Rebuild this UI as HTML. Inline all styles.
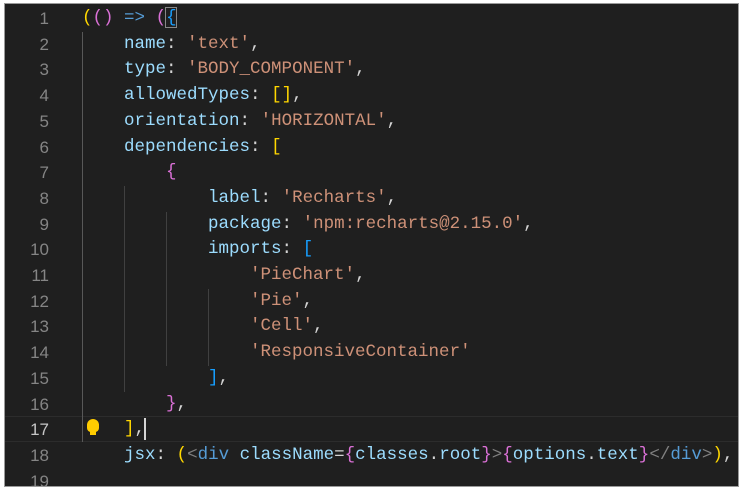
<!DOCTYPE html>
<html><head><meta charset="utf-8"><style>
html,body{margin:0;padding:0;width:742px;height:490px;background:#fff;overflow:hidden}
#ed{position:absolute;left:4px;top:3px;width:735px;height:484px;background:#1f1f1f;border:1px solid #9a9a9a;box-sizing:border-box;overflow:hidden}
.l{position:absolute;left:0;height:25.7px;line-height:25.7px;font-family:"Liberation Mono",monospace;font-size:17.5px;white-space:pre;color:#d4d4d4}
.n{position:absolute;width:44px;text-align:right;color:#858585;font-family:"Liberation Sans",sans-serif;font-size:17px}
.c{position:absolute;left:77px}
.p{color:#9cdcfe}.s{color:#ce9178}.g{color:#ffd700}.m{color:#da70d6}.b{color:#179fff}.k{color:#569cd6}.t{color:#808080}
.gd{position:absolute;width:1px;background:#404040}
</style></head><body><div id="ed">
<div style="position:absolute;left:0;right:0;top:412px;height:24px;border-top:1px solid #2c2c2c;border-bottom:1px solid #2c2c2c;background:#1f1f1f"></div>
<div class="gd" style="left:77px;top:28px;height:410px;background:#585858"></div>
<div class="gd" style="left:119px;top:182px;height:206px"></div>
<div class="gd" style="left:161px;top:208px;height:154px"></div>
<div class="gd" style="left:203px;top:285px;height:77px"></div>
<div id="lines"></div>
<div style="position:absolute;left:82px;top:415px;width:12px;height:13px;border-radius:6px 6px 4px 4px;background:#ffcc00"></div>
<div style="position:absolute;left:85px;top:427px;width:6px;height:4px;background:#ffcc00"></div>
<div style="position:absolute;left:139px;top:414px;width:1.5px;height:22px;background:#d4d4d4"></div>
<div style="position:absolute;left:160px;top:3px;width:12px;height:21px;border:1px solid #888;box-sizing:border-box"></div>
</div>
<script>
var L=[
'<span class="g">(</span><span class="m">()</span> <span class="k">=&gt;</span> <span class="m">(</span><span class="b">{</span>',
'    <span class="p">name</span>: <span class="s">\'text\'</span>,',
'    <span class="p">type</span>: <span class="s">\'BODY_COMPONENT\'</span>,',
'    <span class="p">allowedTypes</span>: <span class="g">[]</span>,',
'    <span class="p">orientation</span>: <span class="s">\'HORIZONTAL\'</span>,',
'    <span class="p">dependencies</span>: <span class="g">[</span>',
'        <span class="m">{</span>',
'            <span class="p">label</span>: <span class="s">\'Recharts\'</span>,',
'            <span class="p">package</span>: <span class="s">\'npm:recharts@2.15.0\'</span>,',
'            <span class="p">imports</span>: <span class="b">[</span>',
'                <span class="s">\'PieChart\'</span>,',
'                <span class="s">\'Pie\'</span>,',
'                <span class="s">\'Cell\'</span>,',
'                <span class="s">\'ResponsiveContainer\'</span>',
'            <span class="b">]</span>,',
'        <span class="m">}</span>,',
'    <span class="g">]</span>,',
'    <span class="p">jsx</span>: <span class="g">(</span><span class="t">&lt;</span><span class="k">div</span> <span class="p">className</span>=<span class="m">{</span><span class="p">classes</span>.<span class="p">root</span><span class="m">}</span><span class="t">&gt;</span><span class="m">{</span><span class="p">options</span>.<span class="p">text</span><span class="m">}</span><span class="t">&lt;/</span><span class="k">div</span><span class="t">&gt;</span><span class="g">)</span>,',
''];
var h='';
for(var i=0;i<19;i++){var y=2+i*25.7;
h+='<div class="l" style="top:'+y+'px;width:100%"><span class="n" style="left:0;'+(i==16?'color:#c6c6c6':'')+'">'+(i+1)+'</span><span class="c">'+L[i]+'</span></div>';}
document.getElementById('lines').innerHTML=h;
</script>
</body></html>
